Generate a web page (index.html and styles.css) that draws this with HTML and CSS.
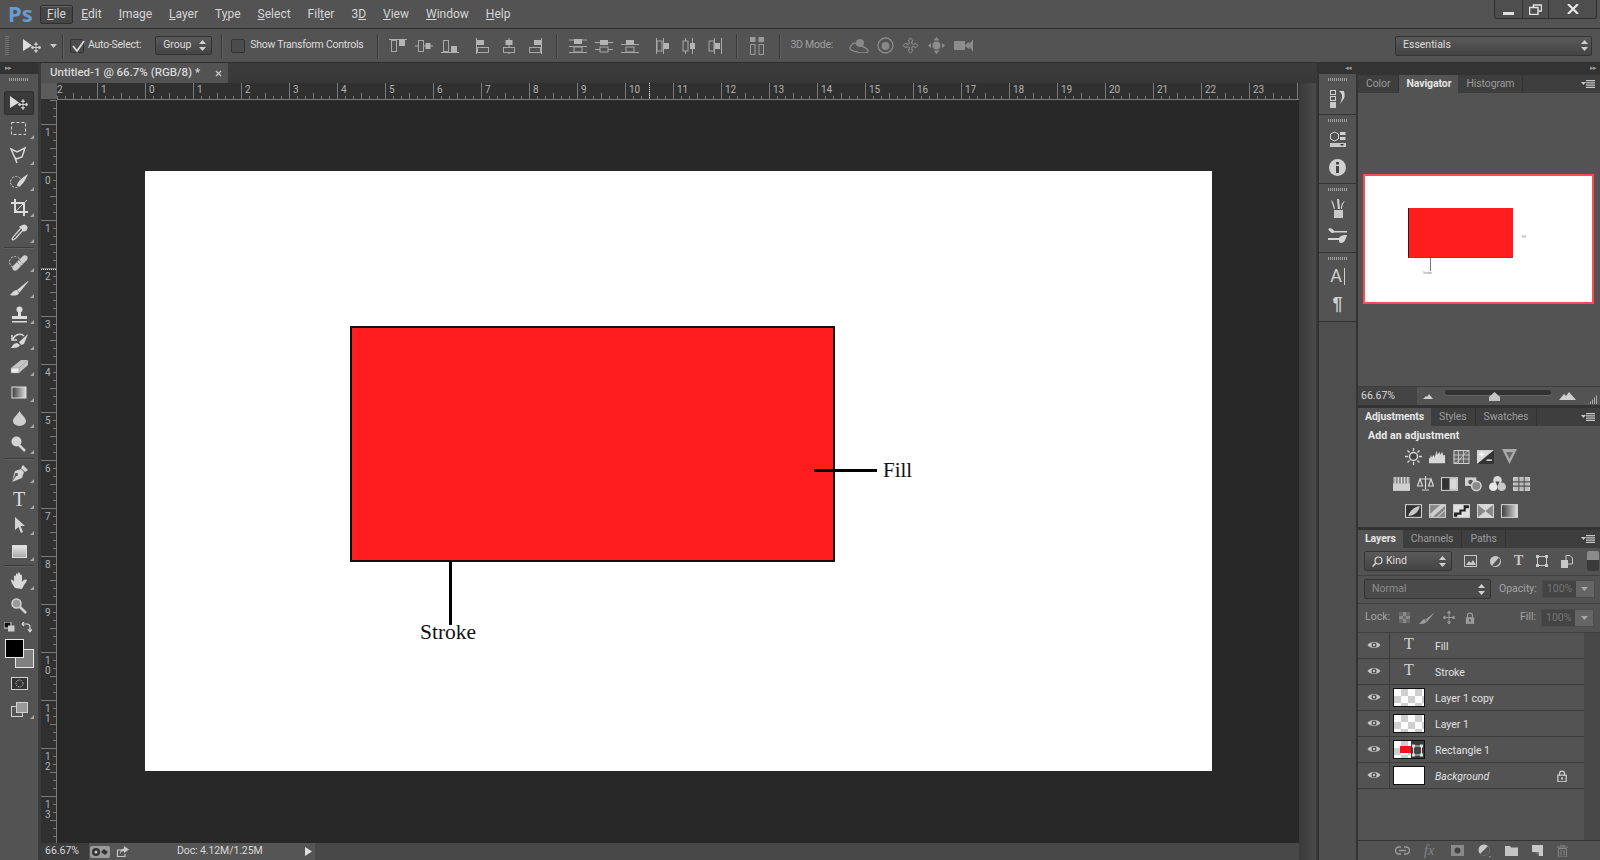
FILE: index.html
```html
<!DOCTYPE html>
<html lang="en">
<head>
<meta charset="utf-8">
<title>Adobe Photoshop</title>
<link rel="stylesheet" href="styles.css">
</head>
<body>
<svg class="defs" width="0" height="0" aria-hidden="true">
  <defs>
    <linearGradient id="g" x1="0" y1="0" x2="0" y2="1"><stop offset="0" stop-color="#e8e8e8"/><stop offset="1" stop-color="#a8a8a8"/></linearGradient>
    <linearGradient id="gh" x1="0" y1="0" x2="1" y2="0"><stop offset="0" stop-color="#3a3a3a"/><stop offset="1" stop-color="#e0e0e0"/></linearGradient>
    <symbol id="eye" viewBox="0 0 14 10"><path d="M0.5 5C3 1 11 1 13.500 5C11 9 3 9 0.500 5Z" fill="#c4c4c4"/><circle cx="7" cy="5" r="2.500" fill="#4a4a4a"/><circle cx="7" cy="5" r="1.200" fill="#c4c4c4"/></symbol>
    <symbol id="menu" viewBox="0 0 14 8"><path d="M0 2h5L2.500 5z" fill="#c8c8c8"/><path d="M5 0h9v1.200H5zM5 2.300h9v1.200H5zM5 4.600h9v1.200H5zM5 6.800h9V8H5z" fill="#c8c8c8"/></symbol>
    <symbol id="move" viewBox="0 0 20 16"><path d="M1 1l9 6.500L1 13z" fill="#dcdcdc"/><path d="M14 5v9M9.500 9.500h9M14 4.500l-1.500 2h3zM14 14.500l-1.500-2h3zM9 9.500l2-1.500v3zM19 9.500l-2-1.500v3z" stroke="#cfcfcf" stroke-width="1" fill="none"/></symbol>
    <symbol id="updown" viewBox="0 0 7 11"><path d="M3.500 0L7 4H0zM3.500 11L0 7h7z" fill="#d0d0d0"/></symbol>
    <symbol id="alignv" viewBox="0 0 18 14"><path d="M0 .5h18" stroke="#b0b0b0"/><rect x="2.500" y="1.500" width="5" height="11" fill="none" stroke="#a8a8a8"/><rect x="10" y="1" width="6" height="6" fill="#b4b4b4"/></symbol>
    <symbol id="alignm" viewBox="0 0 18 14"><path d="M0 7h18" stroke="#b0b0b0"/><rect x="3.500" y="1.500" width="5" height="11" fill="#535353" stroke="#a8a8a8"/><rect x="10.500" y="4" width="5" height="6" fill="#b4b4b4"/></symbol>
    <symbol id="alignb" viewBox="0 0 18 14"><path d="M0 13.500h18" stroke="#b0b0b0"/><rect x="2.500" y="1.500" width="5" height="11" fill="none" stroke="#a8a8a8"/><rect x="10" y="7" width="6" height="6" fill="#b4b4b4"/></symbol>
    <symbol id="alignl" viewBox="0 0 14 16"><path d="M.5 0v16" stroke="#b0b0b0"/><rect x="1" y="2" width="7" height="5" fill="#b4b4b4"/><rect x="1.500" y="9.500" width="11" height="5" fill="none" stroke="#a8a8a8"/></symbol>
    <symbol id="alignc" viewBox="0 0 14 16"><path d="M7 0v16" stroke="#b0b0b0"/><rect x="3.500" y="2" width="7" height="5" fill="#b4b4b4"/><rect x="1.500" y="9.500" width="11" height="5" fill="#535353" stroke="#a8a8a8"/></symbol>
    <symbol id="alignr" viewBox="0 0 14 16"><path d="M13.500 0v16" stroke="#b0b0b0"/><rect x="6" y="2" width="7" height="5" fill="#b4b4b4"/><rect x="1.500" y="9.500" width="11" height="5" fill="none" stroke="#a8a8a8"/></symbol>
    <symbol id="dist1" viewBox="0 0 18 14"><path d="M0 1h18M0 7.500h18M0 13.500h18" stroke="#a8a8a8" fill="none"/><rect x="5" y="0" width="8" height="5" fill="#b4b4b4"/><rect x="5" y="8" width="8" height="5" fill="none" stroke="#a8a8a8"/></symbol>
    <symbol id="dist2" viewBox="0 0 18 14"><path d="M0 3.500h18M0 10.500h18" stroke="#a8a8a8" fill="none"/><rect x="5" y="1" width="8" height="5" fill="#b4b4b4"/><rect x="5" y="8" width="8" height="5" fill="#535353" stroke="#a8a8a8"/></symbol>
    <symbol id="dist3" viewBox="0 0 18 14"><path d="M0 5.500h18M0 13.500h18" stroke="#a8a8a8" fill="none"/><rect x="5" y="1" width="8" height="5" fill="#b4b4b4"/><rect x="5" y="8" width="8" height="5" fill="none" stroke="#a8a8a8"/></symbol>
    <symbol id="disth1" viewBox="0 0 14 16"><path d="M.5 0v16M7.500 0v16" stroke="#a8a8a8"/><rect x="1" y="3" width="5" height="10" fill="none" stroke="#a8a8a8"/><rect x="8" y="5" width="5" height="6" fill="#b4b4b4"/></symbol>
    <symbol id="disth2" viewBox="0 0 14 16"><path d="M3.500 0v16M10.500 0v16" stroke="#a8a8a8"/><rect x="1" y="3" width="5" height="10" fill="#535353" stroke="#a8a8a8"/><rect x="8" y="5" width="5" height="6" fill="#b4b4b4"/></symbol>
    <symbol id="disth3" viewBox="0 0 14 16"><path d="M6.500 0v16M13.500 0v16" stroke="#a8a8a8"/><rect x="1" y="3" width="5" height="10" fill="none" stroke="#a8a8a8"/><rect x="7" y="5" width="5" height="6" fill="#b4b4b4"/></symbol>
    <symbol id="fly" viewBox="0 0 4 4"><path d="M4 0v4H0z" fill="#a8a8a8"/></symbol>
  </defs>
</svg>

<header class="menubar">
  <span class="logo">Ps</span>
  <nav class="menus">
    <span class="menu active"><u>F</u>ile</span>
    <span class="menu"><u>E</u>dit</span>
    <span class="menu"><u>I</u>mage</span>
    <span class="menu"><u>L</u>ayer</span>
    <span class="menu">T<u>y</u>pe</span>
    <span class="menu"><u>S</u>elect</span>
    <span class="menu">Fil<u>t</u>er</span>
    <span class="menu">3<u>D</u></span>
    <span class="menu"><u>V</u>iew</span>
    <span class="menu"><u>W</u>indow</span>
    <span class="menu"><u>H</u>elp</span>
  </nav>
  <div class="winbtns">
    <span class="winbtn w-min"><svg width="11" height="3" viewBox="0 0 11 3"><rect width="11" height="3" fill="#e0e0e0"/></svg></span>
    <span class="winbtn w-max"><svg width="13" height="11" viewBox="0 0 13 11"><path d="M4.500 3V1h8v6h-3M.5 3.500h8.500v7H.5z" fill="none" stroke="#e0e0e0" stroke-width="1.500"/></svg></span>
    <span class="winbtn w-close"><svg width="12" height="10" viewBox="0 0 12 10"><path d="M1 0l5 5 5-5M1 10l5-5 5 5" fill="none" stroke="#e6e6e6" stroke-width="2.200"/></svg></span>
  </div>
</header>

<div class="optionsbar">
  <span class="grip-v"></span>
  <svg class="o-move" width="20" height="16"><use href="#move"/></svg>
  <svg class="o-caret" width="7" height="4" viewBox="0 0 7 4"><path d="M0 0h7L3.500 4z" fill="#c8c8c8"/></svg>
  <span class="osep s1"></span>
  <span class="check on"><svg width="14" height="13" viewBox="0 0 14 13"><path d="M2 6l4 5 7-10" fill="none" stroke="#d8d8d8" stroke-width="1.800"/></svg></span>
  <span class="olabel l1">Auto-Select:</span>
  <span class="select group">Group<svg width="7" height="11"><use href="#updown"/></svg></span>
  <span class="osep s2"></span>
  <span class="check c2"></span>
  <span class="olabel l2">Show Transform Controls</span>
  <span class="osep s3"></span>
  <div class="aligns a-first">
    <svg width="18" height="14"><use href="#alignv"/></svg>
    <svg width="18" height="14"><use href="#alignm"/></svg>
    <svg width="18" height="14"><use href="#alignb"/></svg>
    <svg class="narrow first" width="14" height="16"><use href="#alignl"/></svg>
    <svg class="narrow" width="14" height="16"><use href="#alignc"/></svg>
    <svg class="narrow" width="14" height="16"><use href="#alignr"/></svg>
  </div>
  <span class="osep s4"></span>
  <div class="aligns a-second">
    <svg width="18" height="14"><use href="#dist1"/></svg>
    <svg width="18" height="14"><use href="#dist2"/></svg>
    <svg width="18" height="14"><use href="#dist3"/></svg>
    <svg class="narrow first" width="14" height="16"><use href="#disth1"/></svg>
    <svg class="narrow" width="14" height="16"><use href="#disth2"/></svg>
    <svg class="narrow" width="14" height="16"><use href="#disth3"/></svg>
  </div>
  <span class="osep s5"></span>
  <svg class="auto" width="16" height="18" viewBox="0 0 16 18"><rect x="1" y="0" width="5.500" height="5" fill="#9a9a9a"/><rect x="9.500" y="0" width="5.500" height="5" fill="#9a9a9a"/><rect x="1.500" y="7.500" width="4.500" height="10" fill="none" stroke="#9a9a9a"/><rect x="10" y="7.500" width="4.500" height="10" fill="none" stroke="#9a9a9a"/></svg>
  <span class="osep s6"></span>
  <span class="olabel mode3d">3D Mode:</span>
  <div class="icons3d">
    <svg width="20" height="15" viewBox="0 0 20 15"><circle cx="11" cy="5" r="4" fill="#888"/><path d="M1 10c2-6 6-6 10-3s8 3 8 6-8 2-11 1-7-1-7-4z" fill="none" stroke="#8c8c8c" stroke-width="1.300"/></svg>
    <svg width="17" height="17" viewBox="0 0 17 17"><circle cx="8.500" cy="8.500" r="7.500" fill="none" stroke="#8c8c8c" stroke-width="1.300"/><circle cx="8.500" cy="9" r="4" fill="#888"/></svg>
    <svg width="17" height="17" viewBox="0 0 17 17"><path d="M8.500.8L11 4H9.800v3.200H13V6l3.200 2.500L13 11V9.800H9.800V13H11l-2.500 3.200L6 13h1.200V9.800H4V11L.8 8.500 4 6v1.200h3.200V4H6z" fill="none" stroke="#8c8c8c"/></svg>
    <svg width="19" height="17" viewBox="0 0 19 17"><circle cx="9.500" cy="8.500" r="4" fill="#8c8c8c"/><path d="M9.500 0l3 3.500h-6zM9.500 17l-3-3.500h6zM1 8.500L4 6v5zM18 8.500L15 6v5z" fill="#8c8c8c"/></svg>
    <svg width="20" height="13" viewBox="0 0 20 13"><rect x="0" y="2" width="11" height="9" fill="#8c8c8c"/><path d="M11 6.500l4-3v6zM19 1l-4 5.500 4 5.500" fill="#8c8c8c" stroke="#8c8c8c"/></svg>
  </div>
  <span class="select workspace">Essentials<svg width="7" height="11"><use href="#updown"/></svg></span>
</div>

<main class="main">
  <aside class="toolbar">
    <div class="collapse-head"><span class="arrows">&#9656;&#9656;</span></div>
    <span class="grip"></span>
    <div class="tools">
      <div class="tool selected"><svg width="20" height="16"><use href="#move"/></svg></div>
      <div class="tool"><svg width="16" height="14" viewBox="0 0 16 14"><rect x=".5" y=".5" width="14" height="12" fill="none" stroke="#d8d8d8" stroke-dasharray="3 2"/></svg><svg class="fly" width="4" height="4"><use href="#fly"/></svg></div>
      <div class="tool"><svg width="18" height="18" viewBox="0 0 18 18"><path d="M1 3l6 3 8-4-3 9-6 2-2-3zM5 12l2 5" fill="none" stroke="#d8d8d8" stroke-width="1.500"/></svg><svg class="fly" width="4" height="4"><use href="#fly"/></svg></div>
      <div class="tool"><svg width="19" height="17" viewBox="0 0 19 17"><circle cx="6" cy="9" r="5.500" fill="none" stroke="#d8d8d8" stroke-dasharray="2 1.500"/><path d="M7 12c1-4 6-8 11-11-2 5-5 10-8 12-2 1-3 0-3-1z" fill="#d8d8d8"/></svg><svg class="fly" width="4" height="4"><use href="#fly"/></svg></div>
      <div class="tool"><svg width="17" height="17" viewBox="0 0 17 17"><path d="M4 0v13h13M0 4h13v13" fill="none" stroke="#dcdcdc" stroke-width="2"/><path d="M4 13L16 1" stroke="#dcdcdc"/></svg><svg class="fly" width="4" height="4"><use href="#fly"/></svg></div>
      <div class="tool"><svg width="17" height="18" viewBox="0 0 17 18"><path d="M11 2l4 4-2 1-1-1-7 8-3 2-1-1 2-3 7-8-1-1z" fill="none" stroke="#d8d8d8" stroke-width="1.200"/><path d="M11 1.500a2 2 0 0 1 4.500 4.500l-3 1-3-3z" fill="#d8d8d8"/></svg><svg class="fly" width="4" height="4"><use href="#fly"/></svg></div>
      <div class="tsep"></div>
      <div class="tool"><svg width="20" height="17" viewBox="0 0 20 17"><circle cx="6" cy="8" r="5.500" fill="none" stroke="#d8d8d8" stroke-dasharray="2 1.500"/><path d="M4 12L14 2c3-2 6 1 4 4L8 16c-3 2-6-1-4-4z" fill="#cfcfcf"/><path d="M8 8l4 4M10 6l4 4" stroke="#6a6a6a" stroke-dasharray="1 1"/></svg><svg class="fly" width="4" height="4"><use href="#fly"/></svg></div>
      <div class="tool"><svg width="19" height="17" viewBox="0 0 19 17"><path d="M7 10l11-9 .5.500-9 11z" fill="#d8d8d8"/><path d="M7 10c-3 0-5 3-7 5 3 1 8 1 9-2z" fill="#d8d8d8"/></svg><svg class="fly" width="4" height="4"><use href="#fly"/></svg></div>
      <div class="tool"><svg width="17" height="17" viewBox="0 0 17 17"><circle cx="8.500" cy="3.500" r="3" fill="#dcdcdc"/><path d="M7 6h3v4h6v3H1v-3h6zM1 15h15v1.500H1z" fill="#dcdcdc"/></svg><svg class="fly" width="4" height="4"><use href="#fly"/></svg></div>
      <div class="tool"><svg width="19" height="17" viewBox="0 0 19 17"><path d="M3 7c2-5 8-6 11-3M2 3v5h5" fill="none" stroke="#d8d8d8" stroke-width="1.500"/><path d="M9 10l9-8-4 10-3 1zM7 11c-3 0-5 3-6 5 3 0 8 0 9-3z" fill="#d8d8d8"/></svg><svg class="fly" width="4" height="4"><use href="#fly"/></svg></div>
      <div class="tool"><svg width="19" height="15" viewBox="0 0 19 15"><path d="M1 9L11 1h7v5L9 14H1z" fill="#c4c4c4"/><path d="M1 9h8v5H1zM9 9l9-8" fill="#ececec" stroke="#8a8a8a" stroke-width=".5"/></svg><svg class="fly" width="4" height="4"><use href="#fly"/></svg></div>
      <div class="tool"><svg class="grad" width="16" height="13" viewBox="0 0 16 13"><rect x="1" y="1" width="14" height="11" fill="url(#gh)" stroke="#e0e0e0"/></svg><svg class="fly" width="4" height="4"><use href="#fly"/></svg></div>
      <div class="tool"><svg width="13" height="15" viewBox="0 0 13 15"><path d="M6.500 0C8 3 13 7 13 10a6.500 5 0 0 1-13 0C0 7 5 3 6.500 0z" fill="#cfcfcf"/></svg><svg class="fly" width="4" height="4"><use href="#fly"/></svg></div>
      <div class="tool"><svg width="16" height="16" viewBox="0 0 16 16"><circle cx="5.500" cy="5.500" r="5" fill="#d4d4d4"/><path d="M8 9l6 6" stroke="#d4d4d4" stroke-width="2.500"/></svg><svg class="fly" width="4" height="4"><use href="#fly"/></svg></div>
      <div class="tsep"></div>
      <div class="tool"><svg width="17" height="17" viewBox="0 0 17 17"><path d="M12 0l5 5-3 2-4-4zM10 4l3 3-2 6-10 4 4-6a1.500 1.500 0 1 0-1-1L1 16 4 6z" fill="#d4d4d4"/></svg><svg class="fly" width="4" height="4"><use href="#fly"/></svg></div>
      <div class="tool"><span class="tool-t">T</span><svg class="fly" width="4" height="4"><use href="#fly"/></svg></div>
      <div class="tool"><svg width="11" height="16" viewBox="0 0 11 16"><path d="M1 0l10 9H6.500L9 15l-2 1-2.500-6L1 13z" fill="#d4d4d4"/></svg><svg class="fly" width="4" height="4"><use href="#fly"/></svg></div>
      <div class="tool"><svg width="15" height="13" viewBox="0 0 15 13"><rect x=".5" y=".5" width="14" height="12" fill="url(#g)" stroke="#dcdcdc"/></svg><svg class="fly" width="4" height="4"><use href="#fly"/></svg></div>
      <div class="tsep"></div>
      <div class="tool"><svg width="17" height="17" viewBox="0 0 17 17"><path d="M4 16C2 13 0 10 0 8c1-1 2 0 3 2V4c1-1 2 0 2 1V2c1-1 2 0 2 1V1c1-1 2 0 2 1v1c1-1 2 0 2 1v6c1-2 3-3 5-2-1 3-4 6-5 9z" fill="#d8d8d8"/></svg><svg class="fly" width="4" height="4"><use href="#fly"/></svg></div>
      <div class="tool"><svg width="16" height="16" viewBox="0 0 16 16"><circle cx="5.500" cy="5.500" r="4.500" fill="#9a9a9a" stroke="#d0d0d0" stroke-width="1.500"/><path d="M9 9l6 6" stroke="#d0d0d0" stroke-width="2.500"/></svg></div>
    </div>
    <div class="swap-row">
      <svg width="11" height="10" viewBox="0 0 11 10"><rect x="0" y="0" width="7" height="6" fill="#111" stroke="#ddd"/><rect x="4" y="3.500" width="6.500" height="6" fill="#ccc"/></svg>
      <svg width="11" height="11" viewBox="0 0 11 11"><path d="M1 2h5c2 0 3 1 3 3v4M1 2l2-2M1 2l2 2M9 10l2-3M9 10L7 7" fill="none" stroke="#d8d8d8" stroke-width="1.200"/></svg>
    </div>
    <div class="colors"><span class="bgc"></span><span class="fgc"></span></div>
    <div class="tool qm"><svg width="17" height="13" viewBox="0 0 17 13"><rect x=".5" y=".5" width="16" height="12" fill="#333" stroke="#d0d0d0"/><circle cx="8.500" cy="6.500" r="3.500" fill="none" stroke="#d8d8d8" stroke-dasharray="1 1"/></svg></div>
    <div class="tool sm"><svg width="17" height="15" viewBox="0 0 17 15"><rect x=".5" y="4.500" width="11" height="10" fill="#555" stroke="#d0d0d0"/><rect x="5.500" y=".5" width="11" height="10" fill="#9a9a9a" stroke="#d0d0d0"/></svg><svg class="fly" width="4" height="4"><use href="#fly"/></svg></div>
  </aside>

  <section class="docarea">
    <div class="tabstrip">
      <div class="doctab"><span>Untitled-1 @ 66.7% (RGB/8) *</span><svg width="7" height="7" viewBox="0 0 7 7"><path d="M1 1l5 5M6 1L1 6" stroke="#c8c8c8" stroke-width="1.300"/></svg></div>
    </div>
    <div class="doc-body">
      <div class="doc-main">
        <div class="ruler-top">
          <span class="corner"></span>
          <div class="rh">
            <div class="rhtrack">
              <span class="rc first-cell">2</span><span class="rc">1</span><span class="rc">0</span><span class="rc">1</span><span class="rc">2</span><span class="rc">3</span><span class="rc">4</span><span class="rc">5</span><span class="rc">6</span><span class="rc">7</span><span class="rc">8</span><span class="rc">9</span><span class="rc">10</span><span class="rc">11</span><span class="rc">12</span><span class="rc">13</span><span class="rc">14</span><span class="rc">15</span><span class="rc">16</span><span class="rc">17</span><span class="rc">18</span><span class="rc">19</span><span class="rc">20</span><span class="rc">21</span><span class="rc">22</span><span class="rc">23</span><span class="rc"></span>
            </div>
            <span class="cursor-h"></span>
          </div>
        </div>
        <div class="workrow">
          <div class="rv">
            <div class="rvtrack">
              <span class="vc"></span><span class="vc">1</span><span class="vc">0</span><span class="vc">1</span><span class="vc">2</span><span class="vc">3</span><span class="vc">4</span><span class="vc">5</span><span class="vc">6</span><span class="vc">7</span><span class="vc">8</span><span class="vc">9</span><span class="vc">1<br>0</span><span class="vc">1<br>1</span><span class="vc">1<br>2</span><span class="vc">1<br>3</span>
            </div>
            <span class="cursor-v"></span>
          </div>
          <div class="workspace-area">
            <div class="artboard">
              <div class="rect"></div>
              <div class="line fill-line"></div>
              <div class="line stroke-line"></div>
              <span class="art-text fill-text">Fill</span>
              <span class="art-text stroke-text">Stroke</span>
            </div>
          </div>
        </div>
        <div class="status">
          <span class="st-zoom">66.67%</span>
          <div class="st-info">
            <span class="st-btn"><svg width="18" height="10" viewBox="0 0 18 10"><circle cx="5" cy="5" r="4" fill="#333"/><circle cx="5" cy="5" r="1.500" fill="#ccc"/><path d="M10 5l3-3 4 3-3 3z" fill="#333"/></svg></span>
            <svg class="st-share" width="13" height="11" viewBox="0 0 13 11"><path d="M8 4H1.500v6.500H9V8" fill="none" stroke="#c8c8c8" stroke-width="1.200"/><path d="M8 0l5 3.500L8 7V5C6 5 5 6 4 8c0-3 1-5 4-5.500z" fill="#c8c8c8"/></svg>
            <span class="st-doc">Doc: 4.12M/1.25M</span>
            <svg class="st-arrow" width="7" height="9" viewBox="0 0 7 9"><path d="M0 0l7 4.500L0 9z" fill="#e0e0e0"/></svg>
          </div>
          <span class="st-rest"></span>
        </div>
      </div>
      <div class="vscroll"></div>
    </div>
  </section>

  <aside class="rightside">
    <div class="right-head"><span class="arrows a1">&#9666;&#9666;</span><span class="arrows a2">&#9656;&#9656;</span></div>
    <div class="right-body">
      <div class="dock">
        <div class="dock-group g1"><span class="grip"></span>
          <svg width="16" height="18" viewBox="0 0 16 18"><rect x=".5" y=".5" width="5" height="4" fill="none" stroke="#d0d0d0"/><rect x=".5" y="6.500" width="5" height="4" fill="none" stroke="#d0d0d0"/><rect x="0" y="12" width="6" height="6" fill="#c8c8c8"/><path d="M9 1h5c1 4 1 7-1 9l-3 4c2-5 3-8 1-11z" fill="#d0d0d0"/></svg>
        </div>
        <div class="dock-group g2"><span class="grip"></span>
          <svg class="d3" width="16" height="18" viewBox="0 0 16 18"><path d="M4.500 1l4 2v5l-4 2-4-2V3z" fill="none" stroke="#d0d0d0"/><path d="M10 1h5.500v3H10zM10 6h5.500v3H10z" fill="#d0d0d0"/><rect x="0" y="12" width="16" height="4" fill="#c8c8c8"/><path d="M10 13h4l-2 2z" fill="#333"/></svg>
          <svg class="dinfo" width="17" height="17" viewBox="0 0 17 17"><circle cx="8.500" cy="8.500" r="8.500" fill="#d0d0d0"/><rect x="7" y="3" width="3" height="2.500" fill="#444"/><rect x="7" y="7" width="3" height="7" fill="#444"/></svg>
        </div>
        <div class="dock-group g3"><span class="grip"></span>
          <svg class="dbr" width="16" height="19" viewBox="0 0 16 19"><path d="M4 11h9v8H4z" fill="#c8c8c8"/><path d="M1 1c2 1 3 4 4 9H4zM7 0h2l1 10H8zM15 2c-2 2-3 5-3 8h-1C11 6 12 3 15 2z" fill="#d4d4d4"/></svg>
          <svg class="dpr" width="19" height="15" viewBox="0 0 19 15"><path d="M0 1c3-2 5 0 6 2h13v1.500H6C4 6 2 4 0 1zM0 10h11c2-3 5-3 8-3-1 3-2 8-6 8-2 0-2-2-2-3H0z" fill="#d4d4d4"/></svg>
        </div>
        <div class="dock-group g4"><span class="grip"></span>
          <span class="dA">A<i></i></span>
          <span class="dP">&para;</span>
        </div>
      </div>
      <div class="panels">
        <section class="navigator">
          <div class="tabs">
            <span class="tab">Color</span><span class="tab active">Navigator</span><span class="tab">Histogram</span>
            <svg class="pmenu" width="14" height="8"><use href="#menu"/></svg>
          </div>
          <div class="nav-body">
            <div class="nav-thumb">
              <div class="nt-rect"></div>
              <span class="nt-line"></span>
              <span class="nt-t1">Fill</span>
              <span class="nt-t2">Stroke</span>
            </div>
          </div>
          <div class="zoombar">
            <span class="zval">66.67%</span>
            <svg class="zm1" width="10" height="6" viewBox="0 0 10 6"><path d="M0 6l3-3 1 1 2-3 4 5z" fill="#d0d0d0"/></svg>
            <div class="ztrack"><svg class="zthumb" width="11" height="9" viewBox="0 0 11 9"><path d="M5.500 0L11 5v4H0V5z" fill="#c4c4c4"/></svg></div>
            <svg class="zm2" width="17" height="8" viewBox="0 0 17 8"><path d="M0 8l5-6 2 2 3-4 7 8z" fill="#cfcfcf"/></svg>
            <span class="rgrip"></span>
          </div>
        </section>

        <section class="adjust">
          <div class="tabs">
            <span class="tab active">Adjustments</span><span class="tab">Styles</span><span class="tab">Swatches</span>
            <svg class="pmenu" width="14" height="8"><use href="#menu"/></svg>
          </div>
          <div class="adj-title">Add an adjustment</div>
          <div class="adj-row">
            <svg width="17" height="17" viewBox="0 0 17 17"><circle cx="8.500" cy="8.500" r="4" fill="#444" stroke="#d8d8d8" stroke-width="1.500"/><path d="M8.500 0v3M8.500 14v3M0 8.500h3M14 8.500h3M2.500 2.500l2 2M12.500 12.500l2 2M14.500 2.500l-2 2M4.500 12.500l-2 2" stroke="#d8d8d8" stroke-width="1.300"/></svg>
            <svg width="17" height="14" viewBox="0 0 18 13"><path d="M0 13V7l1 1 1-4 1 3 2-3 1 3 2-7 1 4 2-3 1 3 2-3 1 4 2-1v9z" fill="#d8d8d8"/></svg>
            <svg width="17" height="14" viewBox="0 0 16 14"><rect x=".5" y=".5" width="15" height="13" fill="#666" stroke="#d0d0d0"/><path d="M1 13C7 12 9 3 15 1M0 5h16M0 9h16M5 0v14M10 0v14" stroke="#d0d0d0" stroke-width=".8" fill="none"/></svg>
            <svg width="17" height="14" viewBox="0 0 16 13"><rect width="16" height="13" fill="#d8d8d8"/><path d="M16 0v13H0z" fill="#333"/><path d="M2 4h5M4.500 1.500v5M9 9.500h5" stroke="#fff" stroke-width="1.200"/></svg>
            <svg width="17" height="15" viewBox="0 0 15 15"><path d="M0 0h15L7.500 15z" fill="#aaa"/><path d="M4 3h7L7.500 10z" fill="#6a6a6a"/></svg>
          </div>
          <div class="adj-row">
            <svg width="17" height="14" viewBox="0 0 16 13"><rect width="16" height="13" fill="#d0d0d0"/><path d="M0 0h16v6H0z" fill="#888"/><path d="M2 0v6M5 0v6M8 0v6M11 0v6M14 0v6" stroke="#e8e8e8"/></svg>
            <svg width="17" height="15" viewBox="0 0 17 15"><path d="M8.500 0v13M3 3h11M3 3L.5 10h5zM14 3l-2.500 7h5zM5 14h7" fill="none" stroke="#d8d8d8" stroke-width="1.200"/></svg>
            <svg width="17" height="14" viewBox="0 0 16 13"><rect x=".5" y=".5" width="15" height="12" fill="#333" stroke="#d0d0d0"/><rect x="8" y="1" width="7" height="11" fill="#d8d8d8"/></svg>
            <svg width="17" height="16" viewBox="0 0 18 16"><rect x="0" y="1" width="12" height="9" fill="#d0d0d0"/><circle cx="6" cy="6" r="2.500" fill="#555"/><circle cx="12" cy="10" r="5" fill="#8a8a8a" stroke="#d8d8d8" stroke-width="1.500"/></svg>
            <svg width="17" height="15" viewBox="0 0 16 14"><circle cx="8" cy="4" r="4" fill="#d8d8d8"/><circle cx="4" cy="10" r="4" fill="#e8e8e8"/><circle cx="12" cy="10" r="4" fill="#c8c8c8"/><path d="M6 5h4L8 9z" fill="#444"/></svg>
            <svg width="17" height="14" viewBox="0 0 16 13"><rect x=".5" y=".5" width="15" height="12" fill="#bbb" stroke="#d0d0d0"/><path d="M5.500 0v13M10.500 0v13M0 4.500h16M0 8.500h16" stroke="#555"/></svg>
          </div>
          <div class="adj-row">
            <svg width="17" height="14" viewBox="0 0 16 13"><rect x=".5" y=".5" width="15" height="12" fill="#333" stroke="#d0d0d0"/><path d="M3 11C5 6 9 2 14 2c-1 5-5 9-11 9z" fill="#c8c8c8"/></svg>
            <svg width="17" height="14" viewBox="0 0 16 13"><rect x=".5" y=".5" width="15" height="12" fill="#888" stroke="#d0d0d0"/><path d="M1 10L11 1h4L3 12zM8 12l7-6" fill="#d0d0d0" stroke="#d0d0d0"/></svg>
            <svg width="17" height="14" viewBox="0 0 16 13"><rect x=".5" y=".5" width="15" height="12" fill="#e0e0e0" stroke="#d0d0d0"/><path d="M1 12V8h5V5h4V1h5v3h-3v3H8v3H4v2z" fill="#222"/></svg>
            <svg width="17" height="14" viewBox="0 0 16 13"><rect x=".5" y=".5" width="15" height="12" fill="#888" stroke="#d0d0d0"/><path d="M0 0l8 6.500L16 0zM0 13l8-6.500L16 13z" fill="#d8d8d8"/></svg>
            <svg width="17" height="14" viewBox="0 0 16 13"><rect x=".5" y=".5" width="15" height="12" fill="url(#gh)" stroke="#d0d0d0"/></svg>
          </div>
        </section>

        <section class="layers">
          <div class="tabs">
            <span class="tab active">Layers</span><span class="tab">Channels</span><span class="tab">Paths</span>
            <svg class="pmenu" width="14" height="8"><use href="#menu"/></svg>
          </div>
          <div class="lrow filter">
            <span class="select kind"><svg width="11" height="11" viewBox="0 0 11 11"><circle cx="6.500" cy="4.500" r="3.500" fill="none" stroke="#d8d8d8" stroke-width="1.200"/><path d="M4 7l-3.500 3.500" stroke="#d8d8d8" stroke-width="1.500"/></svg><b>Kind</b><svg width="7" height="11"><use href="#updown"/></svg></span>
            <div class="filter-icons">
              <svg width="13" height="12" viewBox="0 0 13 12"><rect x=".5" y=".5" width="12" height="11" fill="none" stroke="#c8c8c8"/><path d="M2 10l3-4 2 2 2-3 3 5z" fill="#c8c8c8"/></svg>
              <svg width="11" height="11" viewBox="0 0 11 11"><circle cx="5.500" cy="5.500" r="5.500" fill="#c8c8c8"/><path d="M5.500 5.500L9 1.500a5.500 5.500 0 0 1-7 8z" fill="#555"/></svg>
              <span class="fi-t">T</span>
              <svg width="12" height="12" viewBox="0 0 12 12"><rect x="1.500" y="1.500" width="9" height="9" fill="none" stroke="#c8c8c8"/><path d="M0 0h3v3H0zM9 0h3v3H9zM0 9h3v3H0zM9 9h3v3H9z" fill="#c8c8c8"/></svg>
              <svg width="12" height="13" viewBox="0 0 12 13"><path d="M5 .5h4l2.500 2.500v6H5z" fill="none" stroke="#c8c8c8"/><rect x="0" y="5" width="7" height="8" fill="#c8c8c8"/></svg>
            </div>
            <span class="toggle"><i></i></span>
          </div>
          <div class="lrow blend">
            <span class="select normal">Normal<svg width="7" height="11"><use href="#updown"/></svg></span>
            <span class="lbl opacity">Opacity:</span>
            <span class="numfield"><em>100%</em><i><svg width="7" height="4" viewBox="0 0 7 4"><path d="M0 0h7L3.500 4z" fill="#a8a8a8"/></svg></i></span>
          </div>
          <div class="lrow lockrow">
            <span class="lbl lk">Lock:</span>
            <svg class="lk1" width="11" height="11" viewBox="0 0 11 11"><rect width="11" height="11" fill="#8a8a8a"/><path d="M0 0h4v4H0zM7 0h4v4H7zM4 4h3v3H4zM0 7h4v4H0zM7 7h4v4H7z" fill="#6a6a6a"/></svg>
            <svg class="lk2" width="16" height="12" viewBox="0 0 16 12"><path d="M6 8L16 0 8 10zM5 7C3 8 2 10 0 12c3 0 7 0 8-3z" fill="#9a9a9a"/></svg>
            <svg class="lk3" width="12" height="13" viewBox="0 0 12 13"><path d="M6 0v13M0 6.500h12M6 0L4.500 2h3zM6 13l-1.500-2h3zM0 6.500L2 5v3zM12 6.500L10 5v3z" stroke="#9a9a9a" fill="none"/></svg>
            <svg class="lk4" width="10" height="12" viewBox="0 0 12 14"><path d="M3 6V4a3 3 0 0 1 6 0v2" fill="none" stroke="#9a9a9a" stroke-width="1.500"/><rect x="1" y="6" width="10" height="8" fill="#9a9a9a"/><rect x="5" y="8.500" width="2" height="3" fill="#555"/></svg>
            <span class="lbl fillw">Fill:</span>
            <span class="numfield"><em>100%</em><i><svg width="7" height="4" viewBox="0 0 7 4"><path d="M0 0h7L3.500 4z" fill="#a8a8a8"/></svg></i></span>
          </div>
          <div class="layerlist">
            <div class="rows">
              <div class="layer"><span class="eye"><svg width="14" height="10"><use href="#eye"/></svg></span><span class="lthumb t"><b>T</b></span><span class="lname">Fill</span></div>
              <div class="layer"><span class="eye"><svg width="14" height="10"><use href="#eye"/></svg></span><span class="lthumb t"><b>T</b></span><span class="lname">Stroke</span></div>
              <div class="layer"><span class="eye"><svg width="14" height="10"><use href="#eye"/></svg></span><span class="lthumb checker"></span><span class="lname">Layer 1 copy</span></div>
              <div class="layer"><span class="eye"><svg width="14" height="10"><use href="#eye"/></svg></span><span class="lthumb checker"></span><span class="lname">Layer 1</span></div>
              <div class="layer"><span class="eye"><svg width="14" height="10"><use href="#eye"/></svg></span><span class="lthumb checker shape"><i></i><svg width="13" height="17" viewBox="0 0 13 17"><rect width="13" height="17" fill="#3a3a3a"/><rect x="2.500" y="5" width="8" height="9" fill="#444" stroke="#ddd"/><path d="M1 3.500h3v3H1zM9 3.500h3v3H9zM1 12.500h3v3H1zM9 12.500h3v3H9z" fill="#ddd"/></svg></span><span class="lname">Rectangle 1</span></div>
              <div class="layer"><span class="eye"><svg width="14" height="10"><use href="#eye"/></svg></span><span class="lthumb white"></span><span class="lname ital">Background</span><svg class="bglock" width="10" height="12" viewBox="0 0 12 14"><path d="M3 6V4a3 3 0 0 1 6 0v2" fill="none" stroke="#d0d0d0" stroke-width="1.500"/><rect x="1" y="6" width="10" height="8" fill="none" stroke="#d0d0d0" stroke-width="1.500"/><rect x="5" y="8.500" width="2" height="3" fill="#d0d0d0"/></svg></div>
            </div>
            <div class="lscroll"></div>
          </div>
          <div class="ltools">
            <svg width="15" height="9" viewBox="0 0 15 9"><path d="M6 1H4a3.500 3.500 0 0 0 0 7h2M9 1h2a3.500 3.500 0 0 1 0 7H9M4 4.500h7" fill="none" stroke="#9a9a9a" stroke-width="1.500"/></svg>
            <span class="fx">fx</span>
            <svg width="13" height="11" viewBox="0 0 13 11"><rect width="13" height="11" fill="#8a8a8a"/><circle cx="6.500" cy="5.500" r="3" fill="#444"/></svg>
            <svg width="13" height="13" viewBox="0 0 13 13"><circle cx="6" cy="6" r="5.500" fill="#c8c8c8"/><path d="M6 6l4-4a5.500 5.500 0 0 1-8 8z" fill="#555"/><path d="M11 12h2l-1 1z" fill="#c8c8c8"/></svg>
            <svg width="13" height="10" viewBox="0 0 13 10"><path d="M0 0h5l1 1.500h7V10H0z" fill="#c4c4c4"/></svg>
            <svg width="11" height="11" viewBox="0 0 11 11"><path d="M0 0h11v11H7V7H3v0H0z" fill="#c8c8c8"/><path d="M7 7h-4l4 4z" fill="#777"/></svg>
            <svg width="11" height="12" viewBox="0 0 11 12"><path d="M0 2h11M4 2V0h3v2M1.500 3.500h8V12h-8zM4 5v5.500M7 5v5.500" fill="none" stroke="#858585"/></svg>
          </div>
        </section>
      </div>
    </div>
  </aside>
</main>
</body>
</html>
```

FILE: styles.css
```css
* { box-sizing: border-box; }
html, body { margin: 0; padding: 0; }
body {
  width: 1600px; height: 860px; overflow: hidden;
  display: flex; flex-direction: column;
  background: #535353; color: #d6d6d6;
  font-family: Roboto, "Liberation Sans", sans-serif;
  font-size: 11px; line-height: 1;
}
.defs { position: absolute; }
svg { display: block; flex: none; }

/* menu bar */
.menubar {
  height: 29px; flex: none; display: flex; align-items: flex-start;
  background: #535353; border-bottom: 1px solid #2e2e2e;
  padding-left: 8px;
}
.logo { width: 32px; height: 28px; font: bold 22px/26px "Noto Sans", sans-serif; color: #6a9bd0; }
.menus { display: flex; margin-top: 5px; }
.menu { padding: 0 8.500px; height: 19px; line-height: 18px; font-size: 12px; color: #d6d6d6; }
.menu.active { background: #454545; border: 1px solid #2f2f2f; border-radius: 2px; padding: 0 6px; line-height: 16px; box-shadow: inset 0 1px 0 #666; }
.winbtns { margin-left: auto; margin-right: 3px; display: flex; height: 19px; border: 1px solid #2f2f2f; border-top: 0; border-radius: 0 0 3px 3px; background: #4e4e4e; }
.winbtn { display: flex; align-items: center; justify-content: center; border-right: 1px solid #333; }
.winbtn:last-child { border-right: 0; }
.w-min { width: 28px; padding-top: 8px; }
.w-max { width: 26px; }
.w-close { width: 47px; }

/* options bar */
.optionsbar {
  height: 34px; flex: none; display: flex; align-items: center;
  background: #535353; border-bottom: 1px solid #2e2e2e;
  padding-left: 5px;
}
.grip-v { width: 4px; height: 20px; background: repeating-linear-gradient(#8a8a8a 0 1px, transparent 1px 2px); opacity: .55; }
.o-move { margin-left: 13px; }
.o-caret { margin-left: 8px; }
.osep { width: 1px; height: 24px; background: #3a3a3a; box-shadow: 1px 0 0 #606060; flex: none; }
.s1 { margin-left: 5px; }
.s2 { margin-left: 9px; }
.s3 { margin-left: 14px; }
.s4 { margin-left: 12px; }
.s5 { margin-left: 12px; }
.s6 { margin-left: 14px; }
.check { width: 14px; height: 14px; background: #4c4c4c; border: 1px solid #333; border-radius: 2px; flex: none; margin-left: 7px; }
.c2 { margin-left: 9px; }
.olabel { font-size: 10.500px; color: #dcdcdc; white-space: nowrap; letter-spacing: -.25px; }
.l1 { margin-left: 4px; }
.l2 { margin-left: 5px; }
.select {
  display: flex; align-items: center; justify-content: space-between;
  background: linear-gradient(#5a5a5a, #444); border: 1px solid #333; border-radius: 2px;
  color: #dcdcdc; font-size: 10.500px; flex: none;
}
.group { width: 57px; height: 19px; padding: 0 5px 0 7px; margin-left: 14px; }
.aligns { display: flex; align-items: center; gap: 8px; }
.a-first { margin-left: 11px; }
.a-second { margin-left: 12px; }
.narrow { margin: 0 2px; }
.narrow.first { margin-left: 9px; }
.auto { margin-left: 12px; }
.mode3d { margin-left: 10px; color: #a0a0a0; }
.icons3d { display: flex; align-items: center; gap: 8px; margin-left: 16px; }
.workspace { width: 197px; height: 20px; padding: 0 3px 0 7px; margin-left: auto; margin-right: 8px; }

/* main */
.main { flex: 1; min-height: 0; display: flex; background: #3a3a3a; }
.toolbar { width: 38px; flex: none; background: #535353; display: flex; flex-direction: column; align-items: stretch; position: relative; }
.collapse-head { height: 11px; background: #333; display: flex; align-items: center; padding-left: 5px; }
.arrows { font-size: 7px; color: #9a9a9a; letter-spacing: -1px; }
.grip { display: block; width: 20px; height: 3px; margin: 4px auto 9px; background: repeating-linear-gradient(90deg, #a0a0a0 0 1px, transparent 1px 2px); flex: none; }
.tools { display: flex; flex-direction: column; }
.tool { height: 26px; margin: 0 4px; display: flex; align-items: center; justify-content: center; position: relative; flex: none; }
.tool.selected { background: #3a3a3a; border: 1px solid #2f2f2f; border-radius: 2px; height: 24px; margin-bottom: 1px; margin-top: 1px; }
.fly { position: absolute; right: 0; bottom: 3px; }
.tsep { height: 2px; border-top: 1px solid #3c3c3c; margin: 1px 4px 0; flex: none; box-shadow: inset 0 1px 0 #5f5f5f; }
.tool-t { font: 20px/1 "Liberation Serif", serif; color: #dcdcdc; }
.swap-row { display: flex; justify-content: space-between; padding: 0 6px 0 4px; margin-top: 3px; height: 15px; }
.colors { position: relative; height: 30px; margin: 2px 5px 0; }
.fgc, .bgc { position: absolute; width: 19px; height: 19px; border: 1px solid #e8e8e8; }
.fgc { left: 0; top: 0; background: #000; }
.bgc { left: 10px; top: 10px; background: #808080; }
.qm { margin-top: 1px; height: 26px; }
.sm { height: 26px; }

/* document area */
.docarea { flex: 1; min-width: 0; display: flex; flex-direction: column; margin-left: 3px; }
.tabstrip { height: 20px; flex: none; background: linear-gradient(#3d3d3d, #383838); }
.doctab { width: 187px; height: 20px; background: #535353; display: flex; align-items: center; justify-content: space-between; padding: 0 6px 0 9px; font-size: 11.500px; font-weight: 500; color: #d8d8d8; }
.doc-body { flex: 1; min-height: 0; display: flex; }
.doc-main { flex: 1; min-width: 0; display: flex; flex-direction: column; background: #282828; }
.vscroll { width: 17px; flex: none; background: linear-gradient(90deg, #3a3a3a, #4a4a4a); }
.ruler-top { height: 17px; flex: none; display: flex; background: #303030; }
.corner { width: 16px; height: 16px; background: #5c5c5c; flex: none; }
.rh { flex: 1; min-width: 0; overflow: hidden; position: relative; border-bottom: 1px solid #7a7a7a; }
.rhtrack { display: flex; margin-left: -8px; width: 1400px; height: 16px; }
.rc {
  flex: none; width: 48px; height: 16px; padding: 2px 0 0 3px; font-size: 10px; color: #b0b0b0;
  border-left: 1px solid #7a7a7a;
  background:
    repeating-linear-gradient(90deg, transparent 0 7px, #7a7a7a 7px 8px) 0 100% / 48px 3px no-repeat,
    linear-gradient(#7a7a7a, #7a7a7a) 23px 100% / 1px 6px no-repeat;
}
.first-cell { padding-left: 7px; }
.cursor-h { position: absolute; left: 592px; top: 0; width: 1px; height: 16px; background: repeating-linear-gradient(#eee 0 1px, transparent 1px 2px); }
.workrow { flex: 1; min-height: 0; display: flex; }
.rv { width: 16px; flex: none; background: #303030; border-right: 1px solid #7a7a7a; overflow: hidden; position: relative; }
.rvtrack { display: flex; flex-direction: column; margin-top: -24px; }
.vc {
  flex: none; height: 48px; padding: 3px 0 0 4px; font-size: 10px; line-height: 10px; color: #b0b0b0;
  border-top: 1px solid #7a7a7a;
  background:
    repeating-linear-gradient(transparent 0 7px, #7a7a7a 7px 8px) 100% 0 / 3px 48px no-repeat,
    linear-gradient(#7a7a7a, #7a7a7a) 100% 23px / 6px 1px no-repeat;
}
.cursor-v { position: absolute; left: 0; top: 169px; width: 15px; height: 1px; background: repeating-linear-gradient(90deg, #eee 0 1px, transparent 1px 2px); }
.workspace-area { flex: 1; min-width: 0; padding: 71px 0 0 88px; overflow: hidden; }
.artboard { position: relative; width: 1067px; height: 600px; background: #fff; }
.rect { position: absolute; left: 205px; top: 155px; width: 485px; height: 236px; background: #ff1d1e; border: 2px solid #111; }
.line { position: absolute; background: #000; }
.fill-line { left: 669px; top: 298px; width: 63px; height: 3px; }
.stroke-line { left: 304px; top: 391px; width: 3px; height: 63px; }
.art-text { position: absolute; font: 21.500px/24px "Liberation Serif", serif; color: #111; }
.fill-text { left: 738px; top: 287px; font-size: 21px; }
.stroke-text { left: 275px; top: 449px; }

.status { height: 17px; flex: none; display: flex; align-items: center; background: #3c3c3c; }
.st-zoom { width: 48px; padding-left: 4px; font-size: 10.500px; color: #d8d8d8; flex: none; }
.st-info { width: 226px; height: 17px; flex: none; display: flex; align-items: center; background: #555; padding-left: 1px; }
.st-btn { width: 20px; height: 12px; background: #9a9a9a; border-radius: 2px; display: flex; align-items: center; justify-content: center; }
.st-share { margin-left: 6px; }
.st-doc { margin-left: 48px; font-size: 10.500px; letter-spacing: -.1px; color: #d8d8d8; white-space: nowrap; }
.st-arrow { margin-left: auto; margin-right: 3px; }
.st-rest { flex: 1; height: 17px; background: #484848; }

/* right side */
.rightside { width: 283px; flex: none; display: flex; flex-direction: column; margin-left: 1px; border-left: 2px solid #333; }
.right-head { height: 11px; flex: none; background: #333; display: flex; align-items: center; position: relative; }
.a1 { margin-left: 26px; }
.a2 { margin-left: auto; margin-right: 4px; }
.right-body { flex: 1; min-height: 0; display: flex; }
.dock { width: 39px; flex: none; border-right: 2px solid #333; align-self: stretch; background: #4e4e4e; }
.dock-group { background: #535353; border-bottom: 1px solid #333; display: flex; flex-direction: column; align-items: center; }
.g1 { height: 41px; }
.g2 { height: 69px; }
.g3 { height: 69px; }
.g4 { height: 69px; }
.dock-group .grip { margin-bottom: 9px; }
.g3 .grip { margin-bottom: 8px; }
.g4 .grip { margin-bottom: 6px; }
.g2 .dinfo { margin-top: 10px; }
.g3 .dpr { margin-top: 10px; }
.dA { font-size: 18px; line-height: 20px; color: #d0d0d0; display: flex; }
.dA i { width: 1px; height: 17px; background: #d0d0d0; margin: 2px 0 0 2px; }
.dP { font: bold 18px/20px "Liberation Sans", sans-serif; color: #d0d0d0; margin-top: 8px; }

.panels { flex: 1; min-width: 0; display: flex; flex-direction: column; background: #535353; }
.tabs { height: 18px; flex: none; background: #3e3e3e; display: flex; position: relative; }
.tab { padding: 0 8px; line-height: 17px; font-size: 10.500px; letter-spacing: -.1px; color: #9c9c9c; border-right: 1px solid #333; }
.tab.active { background: #535353; color: #e4e4e4; font-weight: 700; border-right: 0; padding: 0 7px; }
.pmenu { position: absolute; right: 5px; top: 5px; }
.navigator { height: 331px; flex: none; display: flex; flex-direction: column; border-top: 1px solid #333; }
.nav-body { flex: 1; min-height: 0; padding: 81px 5px 0 5px; }
.nav-thumb { position: relative; width: 231px; height: 130px; background: #fff; border: 2px solid #f64e54; }
.nt-rect { position: absolute; left: 43px; top: 32px; width: 105px; height: 50px; background: #ff1d1e; border-left: 1px solid #222; border-bottom: 1px solid #555; }
.nt-line { position: absolute; left: 65px; top: 82px; width: 1px; height: 13px; background: #777; }
.nt-t1, .nt-t2 { position: absolute; font-size: 3px; color: #777; }
.nt-t1 { left: 157px; top: 60px; }
.nt-t2 { left: 58px; top: 96px; }
.zoombar { height: 19px; flex: none; display: flex; align-items: center; position: relative; border-top: 1px solid #3e3e3e; }
.zval { width: 59px; height: 18px; line-height: 18px; padding-left: 3px; background: #444; font-size: 10.500px; color: #d8d8d8; flex: none; }
.zm1 { margin-left: 6px; }
.ztrack { position: relative; width: 106px; height: 5px; margin-left: 12px; background: #333; border-radius: 2px; box-shadow: 0 1px 0 #666; margin-top: -7px; }
.zthumb { position: absolute; left: 44px; top: 2px; }
.zm2 { margin-left: 8px; }
.rgrip { position: absolute; right: 2px; bottom: 1px; width: 10px; height: 10px; background: repeating-linear-gradient(90deg, #aaa 0 1px, transparent 1px 2px); clip-path: polygon(100% 0, 100% 100%, 0 100%); }

.adjust { height: 122px; flex: none; border-top: 3px solid #333; }
.adj-title { font-weight: 700; font-size: 10.500px; letter-spacing: .15px; color: #eaeaea; padding: 5px 0 0 10px; height: 17px; }
.adj-row { display: flex; justify-content: center; align-items: center; height: 27px; padding-right: 36px; }
.adj-row svg { margin: 0 3.500px; }

.layers { flex: 1; min-height: 0; display: flex; flex-direction: column; border-top: 3px solid #333; }
.lrow { flex: none; display: flex; align-items: center; border-bottom: 1px solid #404040; padding-left: 6px; padding-bottom: 1px; }
.filter { height: 28px; }
.kind { width: 88px; height: 20px; padding: 0 5px 0 7px; justify-content: flex-start; }
.kind b { font-weight: 400; margin-left: 3px; }
.kind svg:last-child { margin-left: auto; }
.filter-icons { display: flex; align-items: center; gap: 13px; margin-left: 12px; }
.fi-t { font: bold 14px/14px "Liberation Serif", serif; color: #c8c8c8; }
.toggle { width: 12px; height: 20px; margin-left: 14px; background: #3a3a3a; border-radius: 2px; display: block; }
.toggle i { display: block; width: 12px; height: 9px; background: #8a8a8a; border-radius: 2px 2px 0 0; }
.blend { height: 28px; }
.normal { width: 127px; height: 20px; padding: 0 5px 0 7px; color: #8e8e8e; background: #4a4a4a; }
.lbl { color: #a4a4a4; font-size: 10.500px; }
.opacity { margin-left: 8px; }
.numfield { display: flex; width: 53px; height: 18px; margin-left: 5px; background: #444; border: 1px solid #4c4c4c; }
.numfield em { flex: 1; font-style: normal; line-height: 16px; color: #757575; font-size: 10.500px; padding-left: 4px; }
.numfield i { width: 18px; background: #656565; display: flex; align-items: center; justify-content: center; }
.lockrow { height: 29px; padding-right: 6px; }
.lk { margin-left: 1px; }
.lk1 { margin-left: 9px; }
.lk2 { margin-left: 9px; }
.lk3 { margin-left: 8px; }
.lk4 { margin-left: 10px; }
.fillw { margin-left: auto; margin-right: 1px; }
.lockrow .numfield { margin-left: 4px; }

.layerlist { flex: 1; min-height: 0; display: flex; }
.rows { flex: 1; min-width: 0; }
.lscroll { width: 16px; flex: none; background: #484848; }
.layer { height: 26px; display: flex; align-items: center; border-bottom: 1px solid #3c3c3c; position: relative; background: #535353; }
.eye { width: 32px; height: 25px; flex: none; display: flex; align-items: center; justify-content: center; border-right: 1px solid #3c3c3c; padding-bottom: 2px; }
.lthumb { width: 32px; height: 19px; margin-left: 3px; flex: none; border: 1px solid #111; position: relative; }
.lthumb.t { border: 0; background: none; text-align: center; }
.lthumb.t b { font: 16px/16px "Liberation Serif", serif; color: #d4d4d4; display: block; }
.checker { background: repeating-conic-gradient(#cfcfcf 0 25%, #fff 0 50%) 0 0 / 14px 14px; }
.white { background: #fff; }
.shape i { position: absolute; left: 6px; top: 5px; width: 12px; height: 7px; background: #f21418; }
.shape svg { position: absolute; right: 0; top: 0; }
.lname { margin-left: 10px; margin-top: 3px; color: #e0e0e0; font-size: 10.500px; }
.ital { font-style: italic; }
.bglock { position: absolute; right: 17px; top: 7px; }
.ltools { height: 20px; flex: none; border-top: 1px solid #333; display: flex; align-items: center; padding-left: 37px; gap: 14px; background: #535353; }
.fx { font: italic 14px/14px "Liberation Serif", serif; color: #858585; width: 13px; }
```
